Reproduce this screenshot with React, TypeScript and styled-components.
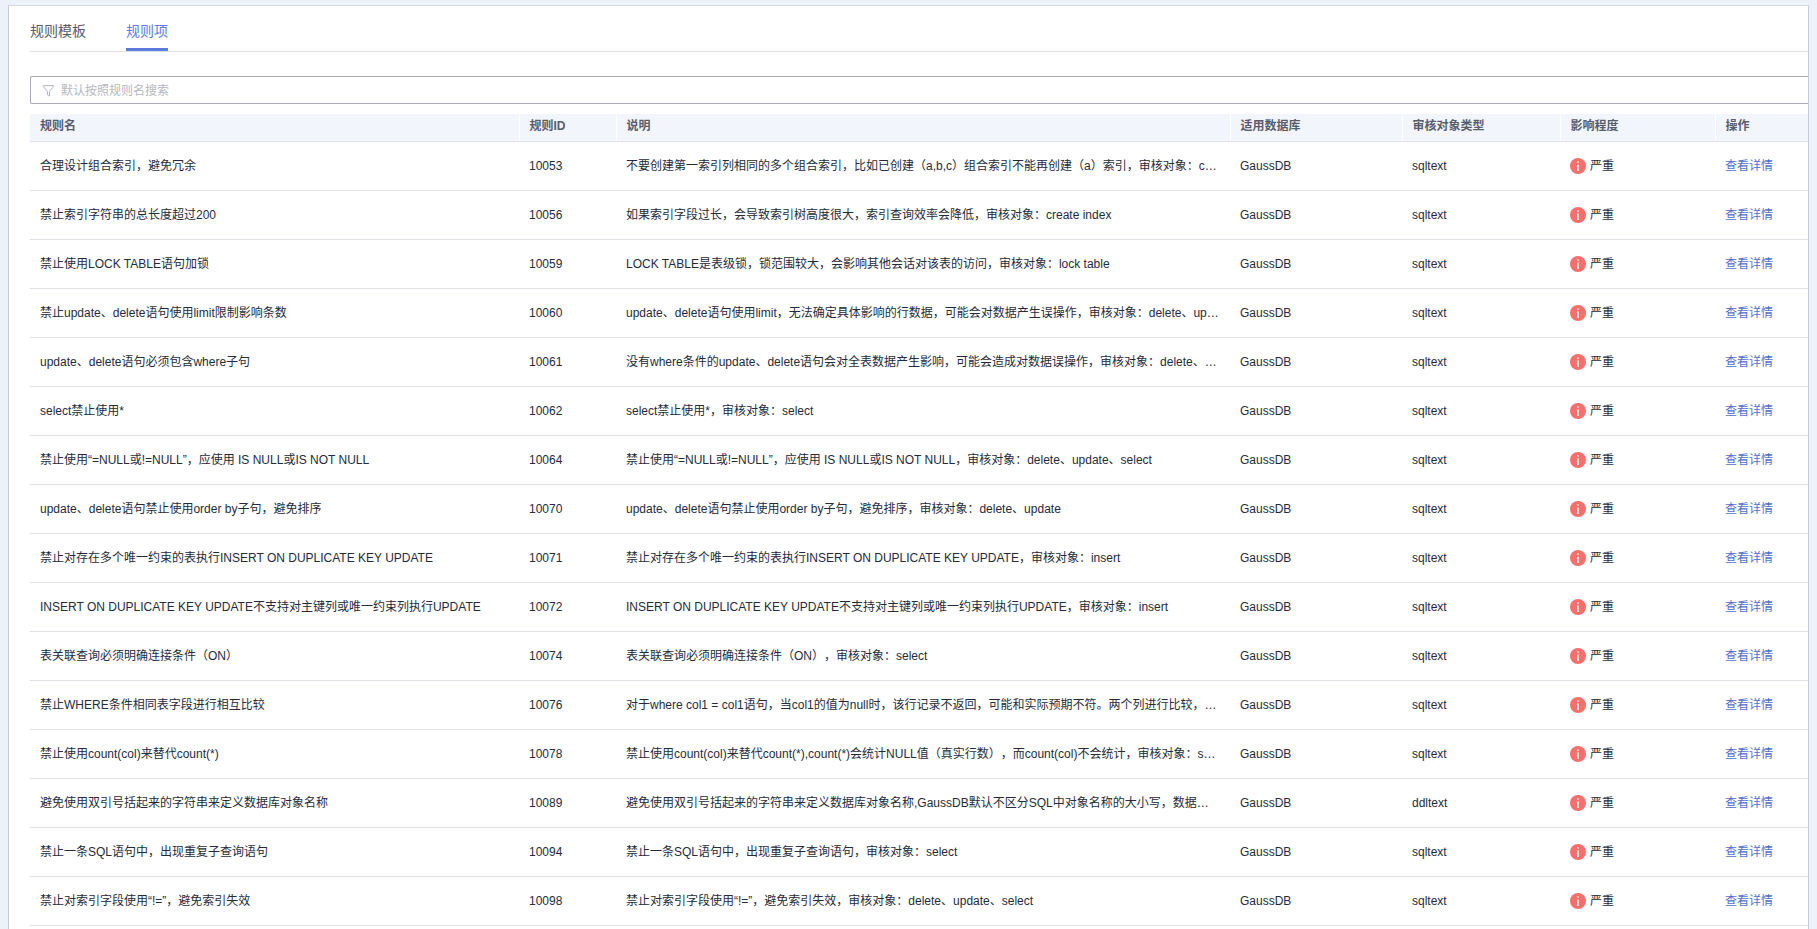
import React from "react";
import styled, {createGlobalStyle} from "styled-components";
import {Filter} from "lucide-react";

const GlobalStyle = createGlobalStyle`
  html, body {
    margin: 0;
    height: 100%;
    overflow: hidden;
    background: #edf1fa;
    font-family: "Liberation Sans", "Noto Sans CJK SC", sans-serif;
    font-size: 12px;
    line-height: 16px;
    text-spacing-trim: space-all;
  }
`;

const Card = styled.div`
  box-sizing: border-box;
  margin: 5px 8px 0 8px;
  height: 924px;
  background: #ffffff;
  border-top: 1px solid #d5d9e4;
  border-left: 1px solid #c5cbdc;
  border-right: 1px solid #c5cbdc;
  overflow: hidden;
`;

const Tabs = styled.div`
  display: flex;
  gap: 40px;
  margin-left: 21px;
  padding-top: 15px;
  border-bottom: 1px solid #dfe1e6;
`;

const Tab = styled.div<{$active?: boolean}>`
  font-size: 14px;
  line-height: 20px;
  padding-bottom: 7px;
  color: ${p => (p.$active ? "#5e7ce0" : "#575d6c")};
  border-bottom: 3px solid ${p => (p.$active ? "#5e7ce0" : "transparent")};
`;

const SearchBox = styled.div`
  box-sizing: border-box;
  display: flex;
  align-items: center;
  gap: 6px;
  height: 28px;
  margin: 24px 0 10px 21px;
  padding-left: 11px;
  border: 1px solid #a9acb6;
  border-right: none;
  border-radius: 2px 0 0 2px;

  svg {
    color: #9ea1ab;
  }
`;

const Placeholder = styled.span`
  padding-top: 1px;
  color: #b5b7bd;
`;

const Table = styled.table`
  display: table;
  width: 1779px;
  margin-left: 21px;
  table-layout: fixed;
  border-collapse: collapse;
`;

const HeadCell = styled.th`
  height: 27px;
  padding: 0 10px 2px;
  box-sizing: border-box;
  text-align: left;
  font-weight: 600;
  color: #575d6c;
  background: #f2f5fc;
  border-right: 1px solid #ffffff;
  border-bottom: 1px solid #dfe1e6;

  &:last-child {
    border-right: none;
  }
`;

const Row = styled.tr`
  height: 49px;
  border-bottom: 1px solid #dfe1e6;
`;

const Cell = styled.td`
  padding: 0 10px;
  color: #252b3a;
  white-space: nowrap;
  overflow: hidden;
  text-overflow: ellipsis;
`;

const Severity = styled.div`
  display: flex;
  align-items: center;
  gap: 4px;
`;

const Dot = styled.span`
  display: flex;
  align-items: center;
  justify-content: center;
  width: 16px;
  height: 16px;
  border-radius: 50%;
  background: #f66f6a;
`;

const DetailLink = styled.a`
  color: #526ecc;
  cursor: pointer;
`;

const columns: [string, number][] = [
    ["规则名", 489],
    ["规则ID", 97],
    ["说明", 614],
    ["适用数据库", 172],
    ["审核对象类型", 158],
    ["影响程度", 155],
    ["操作", 94],
];

const rules: [string, string, string, string?][] = [
    ["合理设计组合索引，避免冗余", "10053", "不要创建第一索引列相同的多个组合索引，比如已创建（a,b,c）组合索引不能再创建（a）索引，审核对象：create index"],
    ["禁止索引字符串的总长度超过200", "10056", "如果索引字段过长，会导致索引树高度很大，索引查询效率会降低，审核对象：create index"],
    ["禁止使用LOCK TABLE语句加锁", "10059", "LOCK TABLE是表级锁，锁范围较大，会影响其他会话对该表的访问，审核对象：lock table"],
    ["禁止update、delete语句使用limit限制影响条数", "10060", "update、delete语句使用limit，无法确定具体影响的行数据，可能会对数据产生误操作，审核对象：delete、update"],
    ["update、delete语句必须包含where子句", "10061", "没有where条件的update、delete语句会对全表数据产生影响，可能会造成对数据误操作，审核对象：delete、update"],
    ["select禁止使用*", "10062", "select禁止使用*，审核对象：select"],
    ["禁止使用“=NULL或!=NULL”，应使用 IS NULL或IS NOT NULL", "10064", "禁止使用“=NULL或!=NULL”，应使用 IS NULL或IS NOT NULL，审核对象：delete、update、select"],
    ["update、delete语句禁止使用order by子句，避免排序", "10070", "update、delete语句禁止使用order by子句，避免排序，审核对象：delete、update"],
    ["禁止对存在多个唯一约束的表执行INSERT ON DUPLICATE KEY UPDATE", "10071", "禁止对存在多个唯一约束的表执行INSERT ON DUPLICATE KEY UPDATE，审核对象：insert"],
    ["INSERT ON DUPLICATE KEY UPDATE不支持对主键列或唯一约束列执行UPDATE", "10072", "INSERT ON DUPLICATE KEY UPDATE不支持对主键列或唯一约束列执行UPDATE，审核对象：insert"],
    ["表关联查询必须明确连接条件（ON）", "10074", "表关联查询必须明确连接条件（ON），审核对象：select"],
    ["禁止WHERE条件相同表字段进行相互比较", "10076", "对于where col1 = col1语句，当col1的值为null时，该行记录不返回，可能和实际预期不符。两个列进行比较，审核对象：select"],
    ["禁止使用count(col)来替代count(*)", "10078", "禁止使用count(col)来替代count(*),count(*)会统计NULL值（真实行数），而count(col)不会统计，审核对象：select"],
    ["避免使用双引号括起来的字符串来定义数据库对象名称", "10089", "避免使用双引号括起来的字符串来定义数据库对象名称,GaussDB默认不区分SQL中对象名称的大小写，数据库对象名称", "ddltext"],
    ["禁止一条SQL语句中，出现重复子查询语句", "10094", "禁止一条SQL语句中，出现重复子查询语句，审核对象：select"],
    ["禁止对索引字段使用“!=”，避免索引失效", "10098", "禁止对索引字段使用“!=”，避免索引失效，审核对象：delete、update、select"],
];

export default function App() {
    return (
        <>
            <GlobalStyle/>
            <Card>
                <Tabs>
                    <Tab>规则模板</Tab>
                    <Tab $active>规则项</Tab>
                </Tabs>
                <SearchBox>
                    <Filter size={13} strokeWidth={1.5}/>
                    <Placeholder>默认按照规则名搜索</Placeholder>
                </SearchBox>
                <Table>
                    <colgroup>
                        {columns.map(([name, width]) => <col key={name} width={width}/>)}
                    </colgroup>
                    <thead>
                        <tr>
                            {columns.map(([name]) => <HeadCell key={name}>{name}</HeadCell>)}
                        </tr>
                    </thead>
                    <tbody>
                        {rules.map(([name, id, desc, type]) => (
                            <Row key={id}>
                                <Cell>{name}</Cell>
                                <Cell>{id}</Cell>
                                <Cell>{desc}</Cell>
                                <Cell>GaussDB</Cell>
                                <Cell>{type ?? "sqltext"}</Cell>
                                <Cell>
                                    <Severity>
                                        <Dot>
                                            <svg width="4" height="10" viewBox="0 0 4 10">
                                                <circle cx="2" cy="1.1" r="0.9" fill="#fff"/>
                                                <rect x="1.2" y="3.4" width="1.6" height="6.6" fill="#fff"/>
                                            </svg>
                                        </Dot>
                                        严重
                                    </Severity>
                                </Cell>
                                <Cell><DetailLink>查看详情</DetailLink></Cell>
                            </Row>
                        ))}
                    </tbody>
                </Table>
            </Card>
        </>
    );
}
